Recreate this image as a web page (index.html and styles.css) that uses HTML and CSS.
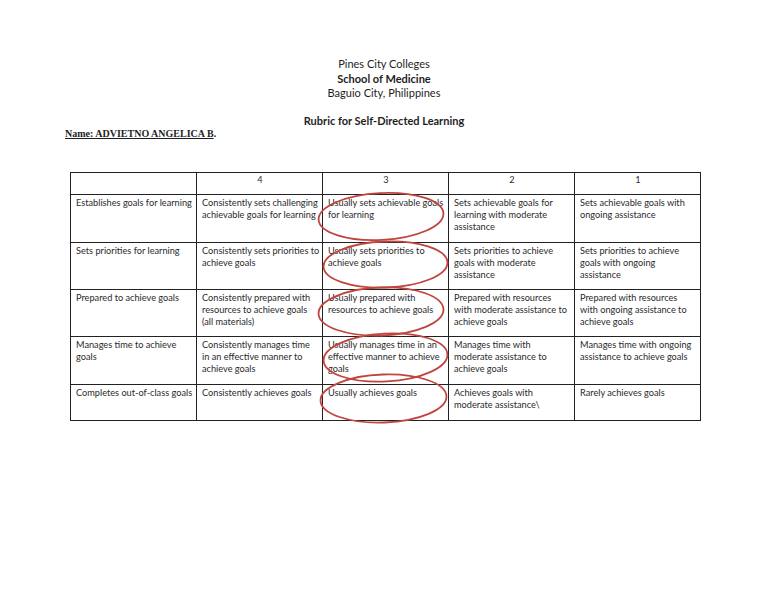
FILE: index.html
```html
<!DOCTYPE html>
<html>
<head>
<meta charset="utf-8">
<link rel="stylesheet" href="styles.css">
</head>
<body>
<div class="page">
  <div class="head">
    <div class="line">Pines City Colleges</div>
    <div class="line bold">School of Medicine</div>
    <div class="line">Baguio City, Philippines</div>
    <div class="title">Rubric for Self-Directed Learning</div>
  </div>
  <div class="name"><u>Name: ADVIETNO ANGELICA B</u>.</div>
  <div class="tablewrap">
    <table class="rubric">
      <tr class="hrow"><th></th><th>4</th><th>3</th><th>2</th><th>1</th></tr>
      <tr class="r1"><td>Establishes goals for learning</td><td>Consistently sets challenging<br>achievable goals for learning</td><td>Usually sets achievable goals<br>for learning</td><td>Sets achievable goals for<br>learning with moderate<br>assistance</td><td>Sets achievable goals with<br>ongoing assistance</td></tr>
      <tr class="r2"><td>Sets priorities for learning</td><td>Consistently sets priorities to<br>achieve goals</td><td>Usually sets priorities to<br>achieve goals</td><td>Sets priorities to achieve<br>goals with moderate<br>assistance</td><td>Sets priorities to achieve<br>goals with ongoing<br>assistance</td></tr>
      <tr class="r3"><td>Prepared to achieve goals</td><td>Consistently prepared with<br>resources to achieve goals<br>(all materials)</td><td>Usually prepared with<br>resources to achieve goals</td><td>Prepared with resources<br>with moderate assistance to<br>achieve goals</td><td>Prepared with resources<br>with ongoing assistance to<br>achieve goals</td></tr>
      <tr class="r4"><td>Manages time to achieve<br>goals</td><td>Consistently manages time<br>in an effective manner to<br>achieve goals</td><td>Usually manages time in an<br>effective manner to achieve<br>goals</td><td>Manages time with<br>moderate assistance to<br>achieve goals</td><td>Manages time with ongoing<br>assistance to achieve goals</td></tr>
      <tr class="r5"><td>Completes out-of-class goals</td><td>Consistently achieves goals</td><td>Usually achieves goals</td><td>Achieves goals with<br>moderate assistance\</td><td>Rarely achieves goals</td></tr>
    </table>
    <svg class="marks" width="640" height="260" viewBox="0 0 640 260">
      <g fill="none" stroke="#c0453f" stroke-width="1.8">
        <ellipse cx="311" cy="44.5" rx="62.5" ry="23.5" transform="rotate(-3 311 44.5)"/>
        <ellipse cx="315.5" cy="92.5" rx="62" ry="23" transform="rotate(-2 315.5 92.5)"/>
        <ellipse cx="311" cy="139.5" rx="62.5" ry="24" transform="rotate(-2 311 139.5)"/>
        <ellipse cx="315.5" cy="185.5" rx="62" ry="24" transform="rotate(-3 315.5 185.5)"/>
        <ellipse cx="313.5" cy="226.5" rx="63" ry="24" transform="rotate(-2 313.5 226.5)"/>
      </g>
    </svg>
  </div>
</div>
</body>
</html>
```
FILE: styles.css
```css
html, body {
  margin: 0;
  padding: 0;
  background: #ffffff;
}
.page {
  width: 768px;
  height: 594px;
  padding-top: 57px;
  box-sizing: border-box;
  color: #1e1e1e;
  font-family: Lato, "Open Sans", sans-serif;
}
.head {
  text-align: center;
  font-size: 11px;
}
.line {
  line-height: 14.7px;
}
.bold {
  font-weight: bold;
}
.title {
  font-weight: bold;
  margin-top: 13px;
  line-height: 14px;
}
.name {
  margin-left: 65px;
  font-family: "Liberation Serif", serif;
  font-weight: bold;
  font-size: 10px;
  line-height: 12px;
  margin-top: 0;
}
.tablewrap {
  position: relative;
  margin-left: 70px;
  margin-top: 32px;
  width: 630px;
}
.rubric {
  border-collapse: collapse;
  table-layout: fixed;
  width: 630px;
  font-size: 9.2px;
  line-height: 11.8px;
  color: #2a2a2a;
}
.rubric th, .rubric td {
  border: 1px solid #222;
  width: 126px;
  vertical-align: top;
  text-align: left;
  white-space: nowrap;
  overflow: hidden;
  padding: 2px 4px 0 5px;
  box-sizing: border-box;
  font-weight: normal;
}
.rubric th {
  text-align: center;
  padding-top: 1px;
}
.hrow { height: 22px; }
.r1 { height: 48px; }
.r2 { height: 47px; }
.r3 { height: 47px; }
.r4 { height: 48px; }
.r5 { height: 36px; }
.marks {
  position: absolute;
  left: 0;
  top: 0;
  pointer-events: none;
}
```
